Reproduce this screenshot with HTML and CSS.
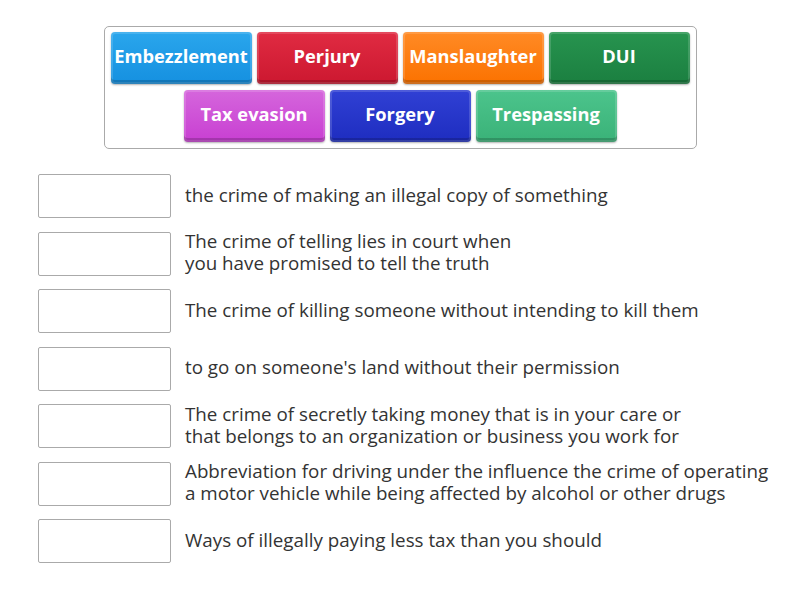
FILE: index.html
```html
<!DOCTYPE html>
<html>
<head>
<meta charset="utf-8">
<link rel="stylesheet" href="styles.css">
</head>
<body>
<div class="bank">
  <div class="bank-row">
    <div class="tile blue">Embezzlement</div>
    <div class="tile red">Perjury</div>
    <div class="tile orange">Manslaughter</div>
    <div class="tile green">DUI</div>
  </div>
  <div class="bank-row">
    <div class="tile magenta">Tax evasion</div>
    <div class="tile navy">Forgery</div>
    <div class="tile mint">Trespassing</div>
  </div>
</div>
<div class="list">
  <div class="item"><div class="slot"></div><div class="def">the crime of making an illegal copy of something</div></div>
  <div class="item"><div class="slot"></div><div class="def">The crime of telling lies in court when<br>you have promised to tell the truth</div></div>
  <div class="item"><div class="slot"></div><div class="def">The crime of killing someone without intending to kill them</div></div>
  <div class="item"><div class="slot"></div><div class="def">to go on someone's land without their permission</div></div>
  <div class="item"><div class="slot"></div><div class="def">The crime of secretly taking money that is in your care or<br>that belongs to an organization or business you work for</div></div>
  <div class="item"><div class="slot"></div><div class="def">Abbreviation for driving under the influence the crime of operating<br>a motor vehicle while being affected by alcohol or other drugs</div></div>
  <div class="item"><div class="slot"></div><div class="def">Ways of illegally paying less tax than you should</div></div>
</div>
</body>
</html>
```
FILE: styles.css
```css
html, body {
  margin: 0;
  padding: 0;
  background: #fff;
  font-family: "Open Sans", "Liberation Sans", sans-serif;
}
.bank {
  width: 579px;
  margin: 26px auto 0;
  padding: 5px 6px 6px;
  border: 1px solid #aaa;
  border-radius: 5px;
  display: flex;
  flex-direction: column;
  gap: 6px;
}
.bank-row {
  display: flex;
  justify-content: center;
  gap: 5px;
}
.tile {
  box-sizing: border-box;
  width: 141px;
  height: 52px;
  border-radius: 4px;
  color: #fff;
  font-weight: 700;
  font-size: 18.3px;
  display: flex;
  align-items: center;
  justify-content: center;
  padding-bottom: 5px;
  box-shadow: inset 0 -4px 0 rgba(0,0,0,0.18), inset 0 0 0 2px rgba(255,255,255,0.15), 0 1px 2px rgba(0,0,0,0.3);
  white-space: nowrap;
}
.blue { background: linear-gradient(#2aa6ec, #1590e0); }
.red { background: linear-gradient(#e02b42, #cc1830); }
.orange { background: linear-gradient(#ff8a25, #fb7200); }
.green { background: linear-gradient(#27944f, #1b7f40); }
.magenta { background: linear-gradient(#d566dc, #c83fd2); }
.navy { background: linear-gradient(#3040d4, #1e2dc0); }
.mint { background: linear-gradient(#4cc48c, #3ab278); }
.list {
  margin: 25px 0 0 38px;
  display: flex;
  flex-direction: column;
  gap: 13.5px;
}
.item {
  display: flex;
  align-items: center;
  gap: 14px;
}
.slot {
  box-sizing: border-box;
  width: 133px;
  height: 44px;
  border: 1px solid #aaa;
  border-radius: 2px;
  flex: none;
}
.def {
  font-size: 18.8px;
  line-height: 22px;
  color: #333;
  white-space: nowrap;
  margin-top: -3px;
}
```
